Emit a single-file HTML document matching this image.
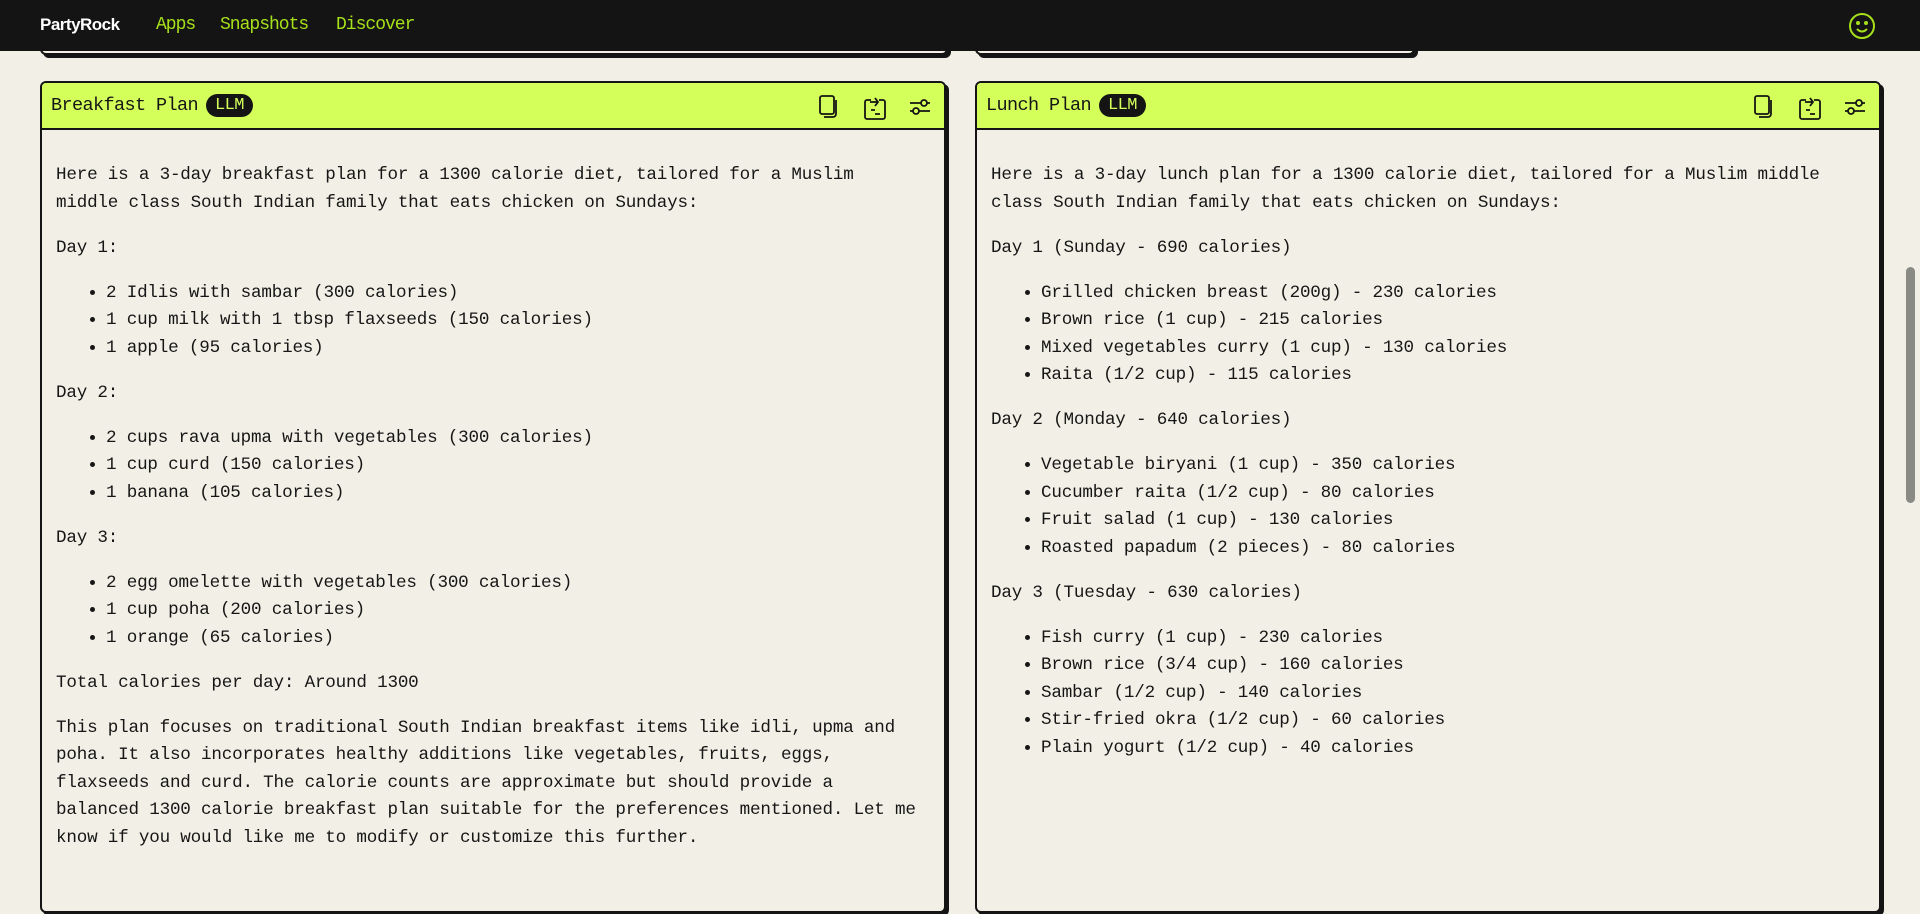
<!DOCTYPE html>
<html><head><meta charset="utf-8"><style>
*{box-sizing:border-box;margin:0;padding:0}
body{width:1920px;height:914px;overflow:hidden;background:#f2f0e6;font-family:"Liberation Mono",monospace;color:#161616;position:relative}
.nav{position:absolute;left:0;top:0;width:1920px;height:51px;background:#141414;z-index:5}
.nav span{position:absolute;top:15px;font-size:18px;letter-spacing:-1px}
.top{position:absolute;top:0;height:55px;border:2px solid #141414;border-top:none;box-shadow:3px 3px 0 #141414;border-radius:0 0 6px 6px;background:#f2f0e6}
.panel{position:absolute;top:81px;height:832px;border:2px solid #141414;border-radius:6px;box-shadow:3px 3px 0 #141414;background:#f2f0e6;overflow:hidden}
.hd{height:47px;background:#d4ff5a;border-bottom:2px solid #141414;position:relative}
.hd .t{position:absolute;left:9px;top:11px;font-size:18.5px;letter-spacing:-.6px}
.badge{display:inline-block;background:#141414;color:#d4ff5a;border-radius:14px;padding:2px 9px;font-size:17px;margin-left:8px;vertical-align:1px}
.ic{position:absolute;top:12px}
.bd{padding:32px 0 0 14px;font-size:17.6px;line-height:27.5px;letter-spacing:-0.2px}
.bd p{margin-bottom:17.5px}
.bd ul{margin:0 0 17.5px 50px}
</style></head><body>
<div class="nav">
<span style="left:40px;color:#fff;font-weight:bold;font-family:'Liberation Sans',sans-serif;letter-spacing:-0.5px;font-size:17px;top:15px">PartyRock</span>
<span style="left:156px;color:#a6e01a">Apps</span>
<span style="left:220px;color:#a6e01a">Snapshots</span>
<span style="left:336px;color:#a6e01a">Discover</span>
<svg style="position:absolute;left:1848px;top:12px" width="28" height="28" viewBox="0 0 28 28" fill="none" stroke="#a6e01a" stroke-width="2"><circle cx="14" cy="14" r="12"/><circle cx="10" cy="11" r="1" fill="#a6e01a"/><circle cx="18" cy="11" r="1" fill="#a6e01a"/><path d="M9 17q5 5 10 0"/></svg>
</div>
<div class="top" style="left:40px;width:908px"></div>
<div class="top" style="left:975px;width:440px"></div>

<div class="panel" style="left:40px;width:906px">
<div class="hd"><div class="t">Breakfast Plan<span class="badge">LLM</span></div>
<svg class="ic" style="left:776px" width="22" height="24" viewBox="0 0 22 24" fill="none" stroke="#141414" stroke-width="1.8"><rect x="2" y="1" width="14" height="18" rx="2"/><path d="M18 5v14a3 3 0 0 1-3 3H6"/></svg>
<svg class="ic" style="left:821px" width="24" height="26" viewBox="0 0 24 26" fill="none" stroke="#141414" stroke-width="1.8"><path d="M8 5H4a2 2 0 0 0-2 2v15a2 2 0 0 0 2 2h16a2 2 0 0 0 2-2V7a2 2 0 0 0-2-2h-4"/><path d="M7 7h8M12 3l3 4-3 4"/><path d="M8 15h4M12 19h5"/></svg>
<svg class="ic" style="left:866px" width="24" height="24" viewBox="0 0 24 24" fill="none" stroke="#141414" stroke-width="1.8"><path d="M2 8h11M19 8h3M2 16h3M11 16h11"/><circle cx="16" cy="8" r="3"/><circle cx="8" cy="16" r="3"/></svg>
</div>
<div class="bd">
<p>Here is a 3-day breakfast plan for a 1300 calorie diet, tailored for a Muslim<br>middle class South Indian family that eats chicken on Sundays:</p>
<p>Day 1:</p>
<ul><li>2 Idlis with sambar (300 calories)</li><li>1 cup milk with 1 tbsp flaxseeds (150 calories)</li><li>1 apple (95 calories)</li></ul>
<p>Day 2:</p>
<ul><li>2 cups rava upma with vegetables (300 calories)</li><li>1 cup curd (150 calories)</li><li>1 banana (105 calories)</li></ul>
<p>Day 3:</p>
<ul><li>2 egg omelette with vegetables (300 calories)</li><li>1 cup poha (200 calories)</li><li>1 orange (65 calories)</li></ul>
<p>Total calories per day: Around 1300</p>
<p>This plan focuses on traditional South Indian breakfast items like idli, upma and<br>poha. It also incorporates healthy additions like vegetables, fruits, eggs,<br>flaxseeds and curd. The calorie counts are approximate but should provide a<br>balanced 1300 calorie breakfast plan suitable for the preferences mentioned. Let me<br>know if you would like me to modify or customize this further.</p>
</div></div>

<div class="panel" style="left:975px;width:906px">
<div class="hd"><div class="t">Lunch Plan<span class="badge">LLM</span></div>
<svg class="ic" style="left:776px" width="22" height="24" viewBox="0 0 22 24" fill="none" stroke="#141414" stroke-width="1.8"><rect x="2" y="1" width="14" height="18" rx="2"/><path d="M18 5v14a3 3 0 0 1-3 3H6"/></svg>
<svg class="ic" style="left:821px" width="24" height="26" viewBox="0 0 24 26" fill="none" stroke="#141414" stroke-width="1.8"><path d="M8 5H4a2 2 0 0 0-2 2v15a2 2 0 0 0 2 2h16a2 2 0 0 0 2-2V7a2 2 0 0 0-2-2h-4"/><path d="M7 7h8M12 3l3 4-3 4"/><path d="M8 15h4M12 19h5"/></svg>
<svg class="ic" style="left:866px" width="24" height="24" viewBox="0 0 24 24" fill="none" stroke="#141414" stroke-width="1.8"><path d="M2 8h11M19 8h3M2 16h3M11 16h11"/><circle cx="16" cy="8" r="3"/><circle cx="8" cy="16" r="3"/></svg>
</div>
<div class="bd">
<p>Here is a 3-day lunch plan for a 1300 calorie diet, tailored for a Muslim middle<br>class South Indian family that eats chicken on Sundays:</p>
<p>Day 1 (Sunday - 690 calories)</p>
<ul><li>Grilled chicken breast (200g) - 230 calories</li><li>Brown rice (1 cup) - 215 calories</li><li>Mixed vegetables curry (1 cup) - 130 calories</li><li>Raita (1/2 cup) - 115 calories</li></ul>
<p>Day 2 (Monday - 640 calories)</p>
<ul><li>Vegetable biryani (1 cup) - 350 calories</li><li>Cucumber raita (1/2 cup) - 80 calories</li><li>Fruit salad (1 cup) - 130 calories</li><li>Roasted papadum (2 pieces) - 80 calories</li></ul>
<p>Day 3 (Tuesday - 630 calories)</p>
<ul><li>Fish curry (1 cup) - 230 calories</li><li>Brown rice (3/4 cup) - 160 calories</li><li>Sambar (1/2 cup) - 140 calories</li><li>Stir-fried okra (1/2 cup) - 60 calories</li><li>Plain yogurt (1/2 cup) - 40 calories</li></ul>
</div></div>

<div style="position:absolute;left:1906px;top:267px;width:9px;height:236px;background:#8a8a85;border-radius:5px"></div>
</body></html>
